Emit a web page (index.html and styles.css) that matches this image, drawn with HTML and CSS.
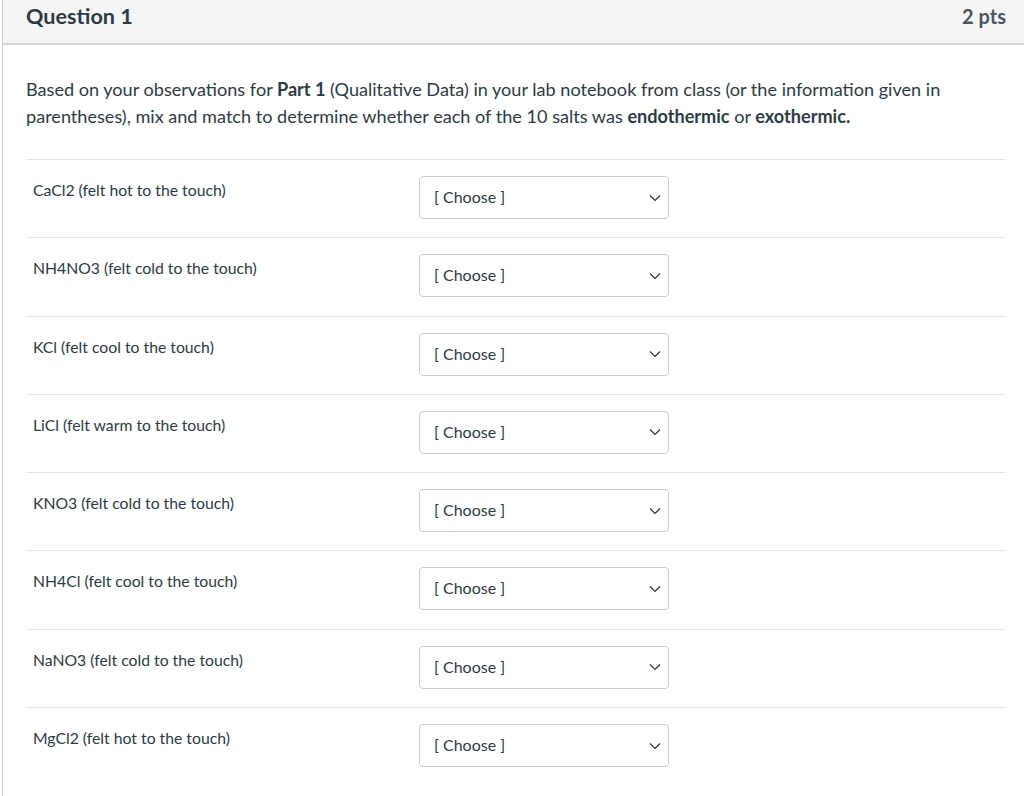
FILE: index.html
```html
<!DOCTYPE html>
<html>
<head>
<meta charset="utf-8">
<link rel="stylesheet" href="styles.css">
</head>
<body>
<div class="question">
  <div class="header">
    <span class="title">Question 1</span>
    <span class="pts">2 pts</span>
  </div>
  <div class="content">
    <p class="text">Based on your observations for <b>Part 1</b> (Qualitative Data) in your lab notebook from class (or the information given in parentheses), mix and match to determine whether each of the 10 salts was <b>endothermic</b> or <b>exothermic.</b></p>
    <div class="answers">
      <div class="row"><div class="label">CaCl2 (felt hot to the touch)</div><div class="select"><span>[ Choose ]</span><svg width="12" height="8" viewBox="0 0 12 8"><path d="M1 1.5 L6 6.5 L11 1.5" fill="none" stroke="#333" stroke-width="1.2"/></svg></div></div>
      <div class="row"><div class="label">NH4NO3 (felt cold to the touch)</div><div class="select"><span>[ Choose ]</span><svg width="12" height="8" viewBox="0 0 12 8"><path d="M1 1.5 L6 6.5 L11 1.5" fill="none" stroke="#333" stroke-width="1.2"/></svg></div></div>
      <div class="row"><div class="label">KCl (felt cool to the touch)</div><div class="select"><span>[ Choose ]</span><svg width="12" height="8" viewBox="0 0 12 8"><path d="M1 1.5 L6 6.5 L11 1.5" fill="none" stroke="#333" stroke-width="1.2"/></svg></div></div>
      <div class="row"><div class="label">LiCl (felt warm to the touch)</div><div class="select"><span>[ Choose ]</span><svg width="12" height="8" viewBox="0 0 12 8"><path d="M1 1.5 L6 6.5 L11 1.5" fill="none" stroke="#333" stroke-width="1.2"/></svg></div></div>
      <div class="row"><div class="label">KNO3 (felt cold to the touch)</div><div class="select"><span>[ Choose ]</span><svg width="12" height="8" viewBox="0 0 12 8"><path d="M1 1.5 L6 6.5 L11 1.5" fill="none" stroke="#333" stroke-width="1.2"/></svg></div></div>
      <div class="row"><div class="label">NH4Cl (felt cool to the touch)</div><div class="select"><span>[ Choose ]</span><svg width="12" height="8" viewBox="0 0 12 8"><path d="M1 1.5 L6 6.5 L11 1.5" fill="none" stroke="#333" stroke-width="1.2"/></svg></div></div>
      <div class="row"><div class="label">NaNO3 (felt cold to the touch)</div><div class="select"><span>[ Choose ]</span><svg width="12" height="8" viewBox="0 0 12 8"><path d="M1 1.5 L6 6.5 L11 1.5" fill="none" stroke="#333" stroke-width="1.2"/></svg></div></div>
      <div class="row"><div class="label">MgCl2 (felt hot to the touch)</div><div class="select"><span>[ Choose ]</span><svg width="12" height="8" viewBox="0 0 12 8"><path d="M1 1.5 L6 6.5 L11 1.5" fill="none" stroke="#333" stroke-width="1.2"/></svg></div></div>
    </div>
  </div>
</div>
</body>
</html>
```
FILE: styles.css
```css
html, body {
  margin: 0;
  padding: 0;
  background: #fff;
  font-family: Lato, "Open Sans", sans-serif;
  color: #2d3b45;
}
.question {
  margin-left: 2px;
  border-left: 1px solid #c7cdd1;
  min-height: 796px;
}
.header {
  height: 43px;
  background: #f5f5f5;
  border-bottom: 2px solid #d4d7d9;
  display: flex;
  align-items: center;
  justify-content: space-between;
  padding: 0 18px 0 23px;
}
.title {
  font-size: 21.6px;
  font-weight: bold;
  color: #2d3b45;
  margin-top: -11px;
}
.pts {
  font-size: 20px;
  font-weight: bold;
  color: #4a5560;
  margin-top: -11px;
}
.content {
  padding: 0 18px 0 23px;
}
.text {
  margin: 31px 0 29px 0;
  font-size: 18.1px;
  line-height: 27px;
  color: #2d3b45;
}
.text b {
  font-weight: bold;
}
.row {
  border-top: 1px solid #e3e5e7;
  height: 77.3px;
  display: flex;
  align-items: flex-start;
}
.label {
  width: 386px;
  padding-left: 7px;
  padding-top: 20px;
  font-size: 15.75px;
  line-height: 20px;
  color: #2d3b45;
}
.select {
  margin-top: 16px;
  display: flex;
  align-items: center;
  justify-content: space-between;
  padding: 0 7px 0 14px;
  box-sizing: border-box;
  width: 250px;
  height: 43px;
  border: 1px solid #c7cdd1;
  border-radius: 4px;
  font-size: 16px;
  color: #2d3b45;
}
.select span {
  padding-bottom: 2px;
}
```
